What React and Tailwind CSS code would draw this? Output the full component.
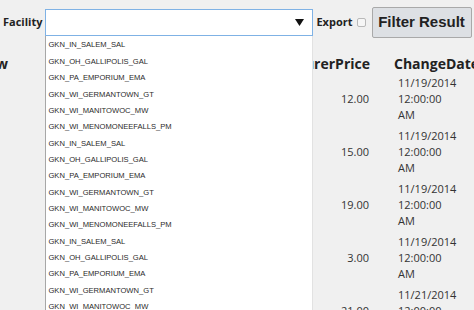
import React from "react";

const facilities = [
  "GKN_IN_SALEM_SAL",
  "GKN_OH_GALLIPOLIS_GAL",
  "GKN_PA_EMPORIUM_EMA",
  "GKN_WI_GERMANTOWN_GT",
  "GKN_WI_MANITOWOC_MW",
  "GKN_WI_MENOMONEEFALLS_PM",
];

const rows = [
  { price: "12.00", date: "11/19/2014" },
  { price: "15.00", date: "11/19/2014" },
  { price: "19.00", date: "11/19/2014" },
  { price: "3.00", date: "11/19/2014" },
  { price: "21.00", date: "11/21/2014" },
];

export default function App() {
  const items = [];
  for (let i = 0; i < 17; i++) items.push(facilities[i % facilities.length]);

  return (
    <div
      className="w-[474px] h-[310px] overflow-hidden bg-[#f0f0f0] text-[#222]"
      style={{ fontFamily: '"Open Sans", "Liberation Sans", sans-serif' }}
    >
      {/* filter bar */}
      <div className="flex items-center mt-[7px] pl-[3px] h-[31px]">
        <span className="text-[11px] font-bold">Facility</span>
        <div className="relative ml-[3px] w-[268px] h-[27px] bg-white border border-[#7fb2e5] z-10">
          <svg className="absolute left-[249px] top-[9px]" width="9" height="7" viewBox="0 0 9 7">
            <polygon points="0,0 9,0 4.5,7" fill="#111" />
          </svg>
          <div className="absolute left-[-1px] top-[26px] w-[268px] h-[290px] bg-white border-l border-[#a7a7a7] border-r border-r-[#e2e2e2] pt-[1px]">
            {items.map((name, i) => (
              <div
                key={i}
                className="h-[16.35px] flex items-center pl-[2px] text-[7.6px] text-[#2a2a2a]"
                style={{ fontFamily: '"Liberation Sans", Arial, sans-serif' }}
              >
                {name}
              </div>
            ))}
          </div>
        </div>
        <span className="ml-[3px] text-[11px] font-bold">Export</span>
        <div className="ml-[4px] w-[9px] h-[9px] border border-[#b9b9b9] rounded-[2px] bg-[#f6f6f6]"></div>
        <button
          className="ml-[6px] w-[100px] h-[31px] bg-[#dde0e4] border border-[#a9a9a9] rounded-[2px] text-[15px] font-bold text-[#222]"
          style={{ fontFamily: '"Liberation Sans", Arial, sans-serif' }}
        >
          Filter Result
        </button>
      </div>

      {/* results table */}
      <div className="mt-[14px]">
        <div className="flex h-[23px] items-center text-[14px] font-bold whitespace-nowrap">
          <div className="w-[250px] shrink-0 -ml-[4px]">w</div>
          <div className="w-[128px] shrink-0 flex justify-end pr-[4px]">
            <span>ManufacturerPrice</span>
          </div>
          <div className="pl-[20px]">ChangeDate</div>
        </div>
        {rows.map((r, i) => (
          <div key={i} className="flex h-[53px] text-[11px] leading-[16px] text-[#333]">
            <div className="w-[250px]"></div>
            <div className="w-[128px] text-right pr-[9px] pt-[16px]">{r.price}</div>
            <div className="pl-[20px]">
              <div>{r.date}</div>
              <div>12:00:00</div>
              <div>AM</div>
            </div>
          </div>
        ))}
      </div>
    </div>
  );
}
